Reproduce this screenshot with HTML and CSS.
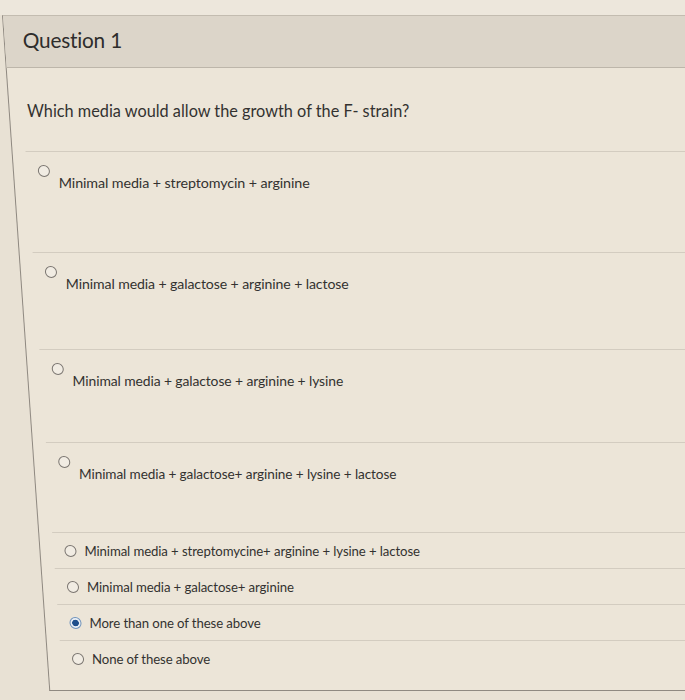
FILE: index.html
```html
<!DOCTYPE html>
<html lang="en">
<head>
<meta charset="utf-8">
<title>Question 1</title>
<link rel="stylesheet" href="styles.css">
</head>
<body>
<div class="page">
  <div class="card">
    <div class="card-head">
      <h2 class="title">Question 1</h2>
    </div>
    <div class="card-body">
      <p class="prompt">Which media would allow the growth of the F- strain?</p>
      <div class="answers">
        <div class="answer tall t1"><span class="radio"></span><span class="label">Minimal media + streptomycin + arginine</span></div>
        <div class="answer tall t2"><span class="radio"></span><span class="label">Minimal media + galactose + arginine + lactose</span></div>
        <div class="answer tall t3"><span class="radio"></span><span class="label">Minimal media + galactose + arginine + lysine</span></div>
        <div class="answer tall t4"><span class="radio"></span><span class="label">Minimal media + galactose+ arginine + lysine + lactose</span></div>
        <div class="answer short"><span class="radio"></span><span class="label">Minimal media + streptomycine+ arginine + lysine + lactose</span></div>
        <div class="answer short"><span class="radio"></span><span class="label">Minimal media + galactose+ arginine</span></div>
        <div class="answer short"><span class="radio checked"></span><span class="label">More than one of these above</span></div>
        <div class="answer short last"><span class="radio"></span><span class="label">None of these above</span></div>
      </div>
    </div>
  </div>
</div>
</body>
</html>
```

FILE: styles.css
```css
* { box-sizing: border-box; }

html, body {
  margin: 0;
  padding: 0;
  width: 685px;
  height: 700px;
  overflow: hidden;
  background: #e9e2d5;
  font-family: Lato, "Open Sans", sans-serif;
  color: #333230;
}

.page {
  padding-top: 15px;
  padding-left: 2px;
  background: linear-gradient(#ede7dc 0, #ede7dc 15px, #e8e1d4 15px);
  height: 700px;
}

.card {
  width: 760px;
  border-top: 1px solid #c3bcb0;
  border-left: 1px solid #8e8880;
  border-bottom: 1px solid #8f8981;
  background: #ece5d8;
  transform: skewX(4deg);
  transform-origin: 0 0;
}

.card-head {
  height: 52px;
  background: #dcd5c9;
  border-bottom: 1px solid #bdb6aa;
  display: flex;
  align-items: center;
  padding-left: 18px;
  padding-bottom: 5px;
}

.title {
  margin: 0;
  font-size: 20.8px;
  font-weight: 400;
  color: #2e2d2c;
  letter-spacing: -0.2px;
  transform: skewX(-4deg);
}

.card-body {
  padding-top: 33px;
  padding-bottom: 14px;
}

.prompt {
  margin: 0 0 30px 18px;
  font-size: 16.3px;
  line-height: 20px;
  color: #333230;
  transform: skewX(-4deg);
  transform-origin: 0 0;
}

.answers {
  margin-left: 13px;
}

.answer {
  display: flex;
  align-items: flex-start;
  padding-left: 11px;
  border-top: 1px solid #d3ccc0;
  font-size: 14px;
  line-height: 18px;
}

.answer .label {
  margin-left: 8px;
  letter-spacing: -0.1px;
  transform: skewX(-4deg);
}

.tall { padding-top: 13px; }
.tall .label { margin-top: 9px; }
.t1 { height: 101px; font-size: 14.3px; }
.t2 { height: 97px; font-size: 14.1px; }
.t3 { height: 93px; font-size: 13.9px; }
.t4 { height: 90px; font-size: 13.6px; }

.short {
  height: 36px;
  padding-top: 9px;
  font-size: 13.2px;
}
.short .radio { margin-top: 3px; }
.last { height: 36px; }

.radio {
  flex: none;
  width: 12px;
  height: 12px;
  border-radius: 50%;
  border: 1.3px solid #7a7570;
  background: #f1ece3;
}

.radio.checked {
  border: 1.5px solid #6f93bd;
  background: radial-gradient(circle, #1f4f8c 0, #1f4f8c 3px, #e9eef4 3.6px);
}
```
